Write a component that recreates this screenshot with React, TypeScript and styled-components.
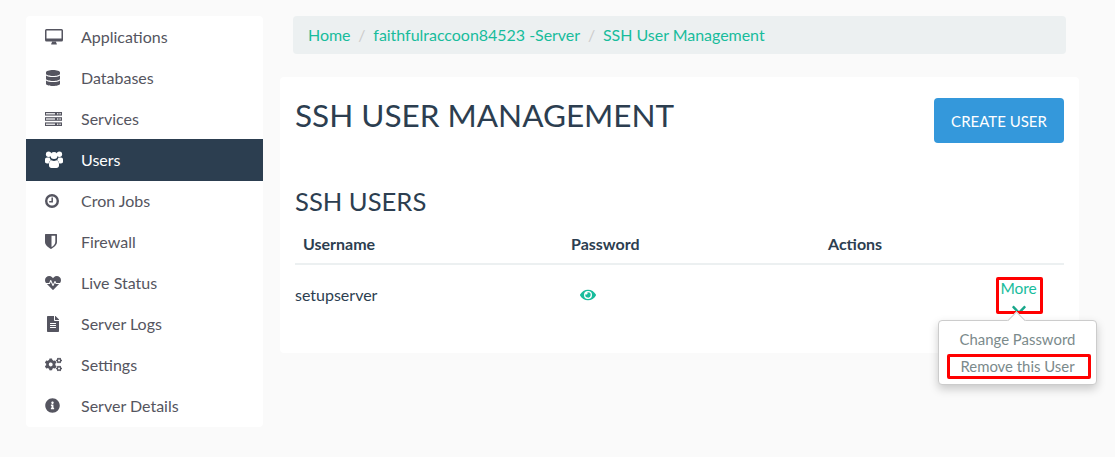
import React from "react";
import styled, { createGlobalStyle } from "styled-components";
import {
  FaDatabase,
  FaHeartbeat,
  FaFileAlt,
  FaCogs,
  FaInfoCircle,
  FaEye,
  FaChevronDown,
} from "react-icons/fa";

const Global = createGlobalStyle`
  html, body { margin: 0; padding: 0; background: #fafafa; }
  body { font-family: Lato, "Open Sans", sans-serif; font-size: 16px; color: #2c3e50; }
  * { box-sizing: border-box; }
`;

const Page = styled.div`
  width: 1115px;
  height: 457px;
  overflow: hidden;
  padding: 16px 36px 0 26px;
  display: flex;
  align-items: flex-start;
  gap: 17px;
`;

const Sidebar = styled.nav`
  width: 237px;
  height: 411px;
  background: #fff;
  border-radius: 4px;
  display: flex;
  flex-direction: column;
`;

const NavItem = styled.a<{ $active?: boolean }>`
  height: ${(p) => (p.$active ? "42px" : "41px")};
  margin-bottom: ${(p) => (p.$active ? "-1px" : "0")};
  padding-bottom: ${(p) => (p.$active ? "1px" : "0")};
  position: relative;
  z-index: ${(p) => (p.$active ? 1 : 0)};
  flex: none;
  display: flex;
  align-items: center;
  padding-left: 19px;
  background: ${(p) => (p.$active ? "#2c3e50" : "transparent")};
  color: ${(p) => (p.$active ? "#fff" : "#555560")};
  font-size: 16px;
`;

const NavIcon = styled.span<{ $size?: number }>`
  width: 36px;
  flex: none;
  display: flex;
  align-items: center;
  font-size: ${(p) => p.$size ?? 16}px;
  svg { display: block; }
`;

const Main = styled.main`
  flex: 1;
  display: flex;
  flex-direction: column;
`;

const Breadcrumb = styled.div`
  margin: 0 13px;
  height: 38px;
  background: #ecf0f1;
  border-radius: 4px;
  display: flex;
  align-items: center;
  padding: 0 15px 2px;
  font-size: 16px;
`;

const Crumb = styled.a`
  color: #18bc9c;
  letter-spacing: -0.03px;
`;

const Sep = styled.span`
  color: #ccc;
  padding: 0 7.8px;
`;

const Card = styled.section`
  margin-top: 23px;
  height: 276px;
  background: #fff;
  border-radius: 4px;
  padding: 21px 15px 0;
  position: relative;
`;

const Header = styled.div`
  display: flex;
  justify-content: space-between;
  align-items: flex-start;
`;

const Title = styled.h1`
  margin: -1px 0 0;
  font-size: 31.5px;
  font-weight: 400;
  line-height: 36px;
  color: #2c3e50;
`;

const CreateButton = styled.button`
  width: 130px;
  height: 45px;
  border: 0;
  border-radius: 4px;
  background: #3498db;
  color: #fff;
  font: 400 15px Lato, sans-serif;
`;

const SubTitle = styled.h2`
  margin: 44px 0 0;
  font-size: 25.6px;
  font-weight: 400;
  line-height: 29px;
  color: #2c3e50;
`;

const Table = styled.div`
  margin-top: 11px;
`;

const HeadRow = styled.div`
  display: grid;
  grid-template-columns: 268px 257px 1fr;
  height: 38px;
  padding-bottom: 3px;
  align-items: center;
  border-bottom: 2px solid #ecf0f1;
`;

const HeadCell = styled.div`
  font-size: 16px;
  font-weight: 700;
  padding-left: 8px;
  color: #2c3e50;
`;

const BodyRow = styled.div`
  display: grid;
  grid-template-columns: 276px 1fr auto;
  height: 60px;
  padding-bottom: 2px;
  align-items: center;
  position: relative;
`;

const Cell = styled.div`
  font-size: 16px;
  color: #2c3e50;
`;

const EyeCell = styled.div`
  padding-left: 9px;
  padding-top: 2px;
  color: #18bc9c;
  font-size: 16px;
  display: flex;
  align-items: center;
  svg { display: block; }
`;

const MoreBox = styled.a`
  position: absolute;
  left: 701px;
  top: 12px;
  width: 47px;
  height: 37px;
  border: 3px solid #f00;
  border-radius: 2px;
  padding-right: 2px;
  color: #18bc9c;
  overflow: hidden;
  text-align: center;
  font-size: 15.5px;
  line-height: 16px;
  letter-spacing: -0.1px;
  svg { display: block; margin: 6px auto 0; font-size: 16px; color: #18a78a; }
`;

const Menu = styled.div`
  position: absolute;
  left: 658px;
  top: 243px;
  width: 159px;
  height: 65px;
  background: #fff;
  border: 1px solid #ccc;
  border-radius: 4px;
  box-shadow: 0 4px 10px rgba(0, 0, 0, 0.2);
  padding-top: 6px;
  display: flex;
  flex-direction: column;
  align-items: center;
  &::before {
    content: "";
    position: absolute;
    left: 71px;
    top: -7px;
    width: 12px;
    height: 12px;
    background: #fff;
    border-left: 1px solid #ccc;
    border-top: 1px solid #ccc;
    transform: rotate(45deg);
  }
`;

const MenuItem = styled.a<{ $marked?: boolean }>`
  position: relative;
  width: ${(p) => (p.$marked ? "144px" : "auto")};
  height: ${(p) => (p.$marked ? "25px" : "26px")};
  line-height: ${(p) => (p.$marked ? "19px" : "25px")};
  margin: ${(p) => (p.$marked ? "1px 0 0 2px" : "0")};
  padding-right: ${(p) => (p.$marked ? "2px" : "0")};
  border: ${(p) => (p.$marked ? "3px solid #f00" : "0")};
  border-radius: 2px;
  text-align: center;
  font-size: 14.9px;
  color: #7b8a8b;
`;

const DesktopIcon = () => (
  <svg width="18" height="16" viewBox="0 0 18 16" fill="currentColor">
    <path fillRule="evenodd" d="M1.5 0h15A1.5 1.5 0 0 1 18 1.5v9.5a1.5 1.5 0 0 1-1.5 1.5h-15A1.5 1.5 0 0 1 0 11V1.5A1.5 1.5 0 0 1 1.5 0zM1.5 1.6V9.6h15V1.6z" />
    <path d="M7 12.5h4c0 1 .3 1.7.8 2.2v.8H6.2v-.8c.5-.5.8-1.2.8-2.2z" />
  </svg>
);

const ServerIcon = () => (
  <svg width="17" height="14" viewBox="0 0 17 14">
    <g fill="currentColor">
      <rect x="0" y="0" width="17" height="3.6" />
      <rect x="0" y="5.2" width="17" height="3.6" />
      <rect x="0" y="10.4" width="17" height="3.6" />
    </g>
    <g fill="#fff">
      <rect x="1" y="1.2" width="9" height="1.2" />
      <rect x="1" y="6.4" width="9" height="1.2" />
      <rect x="1" y="11.6" width="9" height="1.2" />
      <rect x="12" y="1.2" width="1.4" height="1.2" />
      <rect x="14.4" y="1.2" width="1.4" height="1.2" />
      <rect x="12" y="6.4" width="1.4" height="1.2" />
      <rect x="14.4" y="6.4" width="1.4" height="1.2" />
      <rect x="12" y="11.6" width="1.4" height="1.2" />
      <rect x="14.4" y="11.6" width="1.4" height="1.2" />
    </g>
  </svg>
);

const UsersIcon = () => (
  <svg width="18" height="17" viewBox="0 0 18 17" fill="currentColor">
    <circle cx="3.6" cy="3.2" r="2.7" />
    <circle cx="14.4" cy="3.2" r="2.7" />
    <circle cx="9" cy="4.6" r="3.5" />
    <path d="M0 11V8.6C0 7.3.8 6.4 2 6.4h2.6c.2 1.2.7 2.1 1.500 2.800-1.300.6-2.200 1.800-2.400 3.300C1.600 12.500 0 12.200 0 11z" />
    <path d="M18 11V8.600c0-1.300-.8-2.200-2-2.200h-2.600c-.2 1.200-.7 2.100-1.500 2.800 1.300.6 2.200 1.800 2.400 3.300 2.100 0 3.700-.3 3.700-1.500z" />
    <path d="M6.600 9.300C7.300 9.800 8.100 10 9 10s1.700-.2 2.400-.7c1.500.3 2.600 1.700 2.600 3.700v1.500c0 1.200-1 2.500-2.500 2.500h-5C5 17 4 15.700 4 14.500V13c0-2 1.100-3.400 2.600-3.700z" />
  </svg>
);

const ClockIcon = () => (
  <svg width="14" height="14" viewBox="0 0 14 14" fill="none" stroke="currentColor">
    <circle cx="7" cy="7" r="5.8" strokeWidth="2.4" />
    <path d="M7.200 3.400V7.700H4.200" strokeWidth="1.500" />
  </svg>
);

const ShieldIcon = () => (
  <svg width="12" height="15" viewBox="0 0 12 15" fill="currentColor">
    <path fillRule="evenodd" d="M.6 0h10.800c.3 0 .6.300.6.600V8c0 3.200-3.600 5.800-6 7-2.400-1.200-6-3.800-6-7V.6C0 .3.300 0 .6 0zM6.500 1.700v11.400c1.800-1 3.800-2.900 3.800-5.100V1.700z" />
  </svg>
);

const navItems = [
  { label: "Applications", icon: <DesktopIcon /> },
  { label: "Databases", icon: <FaDatabase /> },
  { label: "Services", icon: <ServerIcon /> },
  { label: "Users", icon: <UsersIcon />, active: true },
  { label: "Cron Jobs", icon: <ClockIcon /> },
  { label: "Firewall", icon: <ShieldIcon /> },
  { label: "Live Status", icon: <FaHeartbeat /> },
  { label: "Server Logs", icon: <FaFileAlt /> },
  { label: "Settings", icon: <FaCogs />, size: 17 },
  { label: "Server Details", icon: <FaInfoCircle />, size: 15 },
];

export default function App() {
  return (
    <Page>
      <Global />
      <Sidebar>
        {navItems.map(({ label, icon, active, size }) => (
          <NavItem key={label} $active={active}>
            <NavIcon $size={size}>{icon}</NavIcon>
            {label}
          </NavItem>
        ))}
      </Sidebar>
      <Main>
        <Breadcrumb>
          <Crumb>Home</Crumb>
          <Sep>/</Sep>
          <Crumb>faithfulraccoon84523 -Server</Crumb>
          <Sep>/</Sep>
          <Crumb>SSH User Management</Crumb>
        </Breadcrumb>
        <Card>
          <Header>
            <Title>SSH USER MANAGEMENT</Title>
            <CreateButton>CREATE USER</CreateButton>
          </Header>
          <SubTitle>SSH USERS</SubTitle>
          <Table>
            <HeadRow>
              <HeadCell>Username</HeadCell>
              <HeadCell>Password</HeadCell>
              <HeadCell>Actions</HeadCell>
            </HeadRow>
            <BodyRow>
              <Cell>setupserver</Cell>
              <EyeCell>
                <FaEye />
              </EyeCell>
              <MoreBox>
                More
                <FaChevronDown />
              </MoreBox>
            </BodyRow>
          </Table>
          <Menu>
            <MenuItem>Change Password</MenuItem>
            <MenuItem $marked>Remove this User</MenuItem>
          </Menu>
        </Card>
      </Main>
    </Page>
  );
}
